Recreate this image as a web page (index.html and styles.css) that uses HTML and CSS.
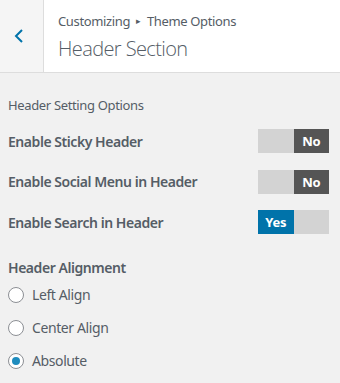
FILE: index.html
```html
<!DOCTYPE html>
<html lang="en">
<head>
  <meta charset="UTF-8" />
  <title>Header Section</title>
  <link rel="stylesheet" href="styles.css">
</head>
<body>
  <div class="head">
    <button class="back" aria-label="Back">
      <svg width="10" height="14" viewBox="0 0 10 14"><path d="M8 1 L2 7 L8 13" fill="none" stroke="#0073aa" stroke-width="2"/></svg>
    </button>
    <div class="head-text">
      <div class="crumb">Customizing <span class="arrow">▸</span> Theme Options</div>
      <div class="title">Header Section</div>
    </div>
  </div>

  <div class="panel">
    <p class="desc">Header Setting Options</p>

    <div class="row">
      <span class="label">Enable Sticky Header</span>
      <span class="toggle off"><i></i><b>No</b></span>
    </div>
    <div class="row">
      <span class="label">Enable Social Menu in Header</span>
      <span class="toggle off"><i></i><b>No</b></span>
    </div>
    <div class="row">
      <span class="label">Enable Search in Header</span>
      <span class="toggle on"><b>Yes</b><i></i></span>
    </div>

    <div class="group-title">Header Alignment</div>
    <label class="radio"><span class="dot"></span>Left Align</label>
    <label class="radio"><span class="dot"></span>Center Align</label>
    <label class="radio"><span class="dot checked"></span>Absolute</label>
  </div>
</body>
</html>
```
FILE: styles.css
```css
body { margin: 0; background: #f1f1f1; font-family: "Noto Sans", "Open Sans", sans-serif; color: #555d66; }
.head { display: flex; height: 72px; background: #fff; border-bottom: 1px solid #ddd; }
.back { width: 44px; border: 0; border-right: 1px solid #ddd; background: #f5f5f5; display: flex; align-items: center; justify-content: center; padding: 0 6px 0 0; }
.head-text { padding: 11px 0 0 14px; }
.crumb { font-size: 13px; line-height: 20px; letter-spacing: -0.35px; }
.arrow { font-size: 9px; vertical-align: 2px; margin: 0 3px; }
.title { font-family: "Open Sans", "Noto Sans", sans-serif; font-size: 20px; font-weight: 300; line-height: 28px; margin-top: 4px; letter-spacing: -0.6px; }
.panel { padding: 0 11px 0 8px; }
.desc { margin: 22px 0 0; font-size: 13px; line-height: 20px; letter-spacing: -0.35px; }
.row { display: flex; align-items: center; justify-content: space-between; height: 24px; margin-top: 14px; }
.row + .row { margin-top: 16.5px; }
.label { font-size: 14px; font-weight: 600; letter-spacing: -0.45px; }
.toggle { display: flex; width: 71px; height: 24px; }
.toggle i { flex: 1; background: #d3d3d3; }
.toggle b { flex: 1; color: #fff; font-size: 13px; font-weight: 700; display: flex; align-items: center; justify-content: center; letter-spacing: -0.3px; }
.off b { background: #555; }
.on b { background: #0073aa; }
.group-title { font-size: 14px; font-weight: 600; margin-top: 24px; line-height: 20px; letter-spacing: -0.45px; }
.radio { display: flex; align-items: center; gap: 8px; font-size: 14px; height: 33px; letter-spacing: -0.4px; }
.dot { width: 14px; height: 14px; border: 1px solid #8c8f94; border-radius: 50%; background: #fff; display: inline-flex; align-items: center; justify-content: center; }
.dot.checked::after { content: ""; width: 8px; height: 8px; border-radius: 50%; background: #1e8cbe; }
```
